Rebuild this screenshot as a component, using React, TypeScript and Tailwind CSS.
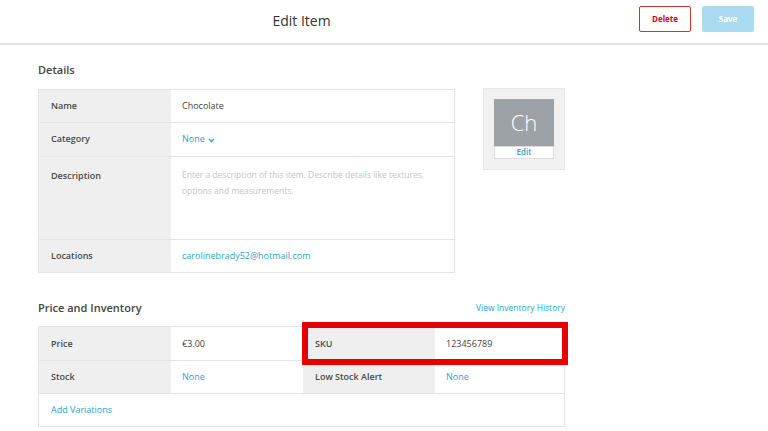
import React from 'react'

const font = { fontFamily: '"Open Sans", "Noto Sans", Arial, sans-serif' }

function Label({ children, top }: { children: React.ReactNode; top?: boolean }) {
  return (
    <div
      className={`w-[132px] shrink-0 bg-[#efefef] px-3 text-[9px] font-semibold text-[#4a4a4a] flex ${
        top ? 'items-start pt-[12px]' : 'items-center'
      }`}
    >
      {children}
    </div>
  )
}

export default function App() {
  return (
    <div className="w-[768px] h-[431px] bg-white overflow-hidden" style={font}>
      {/* Header */}
      <div className="h-[45px] flex items-center border-b-2 border-[#e3e3e3]">
        <div className="ml-[38px] w-[527px] text-center text-[14px] font-medium text-[#333] -mt-[3px]">Edit Item</div>
        <div className="ml-auto mr-[14px] flex gap-[11px] -mt-[6px]">
          <button className="w-[52px] h-[26px] rounded-[2px] border border-[#c33] text-[8px] font-bold text-[#d0021b] bg-white">
            Delete
          </button>
          <button className="w-[52px] h-[26px] rounded-[2px] bg-[#a9dcf0] text-[8px] font-bold text-white">Save</button>
        </div>
      </div>

      <div className="pl-[38px] w-[565px]">
        {/* Details */}
        <div className="mt-[17px] text-[11px] font-semibold text-[#444]">Details</div>
        <div className="mt-[10px] flex gap-[28px]">
          <div className="w-[417px] border border-[#e4e4e4] flex flex-col">
            <div className="h-[33px] flex border-b border-[#e4e4e4]">
              <Label>Name</Label>
              <div className="flex-1 flex items-center px-[11px] text-[9px] text-[#444]">Chocolate</div>
            </div>
            <div className="h-[34px] flex border-b border-[#e4e4e4]">
              <Label>Category</Label>
              <div className="flex-1 flex items-center gap-[3px] px-[11px] text-[9px] text-[#2aa5c4]">
                None
                <svg width="7" height="5" viewBox="0 0 7 5" className="mt-[2px]">
                  <path d="M1 1l2.5 2.5L6 1" fill="none" stroke="#2aa5c4" strokeWidth="1.4" />
                </svg>
              </div>
            </div>
            <div className="h-[83px] flex border-b border-[#e4e4e4]">
              <Label top>Description</Label>
              <div className="flex-1 px-[11px] pt-[10px] text-[8.5px] leading-[16px] text-[#c4c4c4]">
                Enter a description of this item. Describe details like textures, options and measurements.
              </div>
            </div>
            <div className="h-[32px] flex">
              <Label>Locations</Label>
              <div className="flex-1 flex items-center px-[11px] text-[9px] text-[#2aa5c4]">carolinebrady52@hotmail.com</div>
            </div>
          </div>

          <div className="w-[82px] h-[82px] -mt-[1px] bg-[#f1f1f1] border border-[#e8e8e8] flex flex-col items-center pt-[10px]">
            <div className="w-[60px] h-[47px] bg-[#9da2a7] flex items-center justify-center text-[22px] font-light text-white">
              Ch
            </div>
            <div className="w-[60px] h-[13px] bg-white border border-[#ddd] flex items-center justify-center text-[8px] font-semibold text-[#2aa5c4]">
              Edit
            </div>
          </div>
        </div>

        {/* Price and Inventory */}
        <div className="mt-[27px] flex items-end justify-between">
          <div className="text-[11px] font-semibold text-[#444]">Price and Inventory</div>
          <div className="text-[8.5px] text-[#2aa5c4] mb-[1px]">View Inventory History</div>
        </div>
        <div className="mt-[10px] w-[527px] border border-[#e4e4e4] flex flex-col">
          <div className="h-[34px] flex border-b border-[#e4e4e4]">
            <Label>Price</Label>
            <div className="w-[132px] flex items-center px-[11px] text-[9px] text-[#444]">€3.00</div>
            <div className="relative flex-1 flex">
              <Label>SKU</Label>
              <div className="flex-1 flex items-center px-[11px] text-[9px] text-[#444]">123456789</div>
              <div className="absolute -left-[1px] -top-[5px] -right-[4px] -bottom-[5px] border-[6px] border-[#e60000]" />
            </div>
          </div>
          <div className="h-[33px] flex border-b border-[#e4e4e4]">
            <Label>Stock</Label>
            <div className="w-[132px] flex items-center px-[11px] text-[9px] text-[#2aa5c4]">None</div>
            <Label>Low Stock Alert</Label>
            <div className="flex-1 flex items-center px-[11px] text-[9px] text-[#2aa5c4]">None</div>
          </div>
          <div className="h-[32px] flex items-center px-[12px] text-[9px] text-[#2aa5c4]">Add Variations</div>
        </div>
      </div>
    </div>
  )
}
